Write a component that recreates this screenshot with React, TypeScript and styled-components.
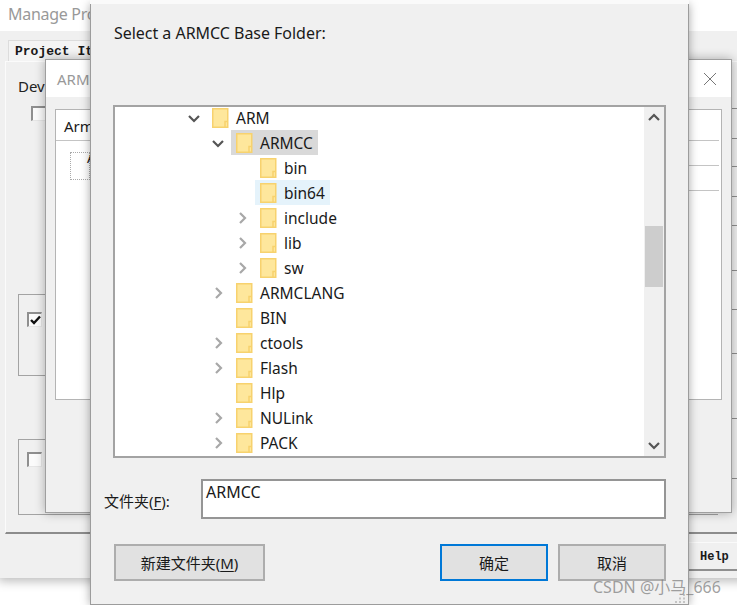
import React from "react";
import styled, { createGlobalStyle } from "styled-components";

const uiFont = `"Noto Sans", "Noto Sans CJK SC", sans-serif`;
const borderGray = "#a3a3a3";

interface ITreeItem {
  name: string;
  level: number;
  arrow?: "open" | "closed";
  state?: "selected" | "hover";
}

const treeItems: ITreeItem[] = [
  { name: "ARM", level: 0, arrow: "open" },
  { name: "ARMCC", level: 1, arrow: "open", state: "selected" },
  { name: "bin", level: 2 },
  { name: "bin64", level: 2, state: "hover" },
  { name: "include", level: 2, arrow: "closed" },
  { name: "lib", level: 2, arrow: "closed" },
  { name: "sw", level: 2, arrow: "closed" },
  { name: "ARMCLANG", level: 1, arrow: "closed" },
  { name: "BIN", level: 1 },
  { name: "ctools", level: 1, arrow: "closed" },
  { name: "Flash", level: 1, arrow: "closed" },
  { name: "Hlp", level: 1 },
  { name: "NULink", level: 1, arrow: "closed" },
  { name: "PACK", level: 1, arrow: "closed" }
];

// slivers of the controls of the back window that stick out on the right
const sliverGaps = [28, 29, 27, 29, 28, 44, 38, 43, 64, 59];

const FolderIcon = () => (
  <svg width="17" height="20" viewBox="0 0 17 20">
    <rect x="0.75" y="0.75" width="15" height="18.5" fill="#fee79c" stroke="#f7d26e" strokeWidth="1.5" />
    <path d="M13 19V13.5H16" fill="none" stroke="#f7d26e" strokeWidth="1.5" />
  </svg>
);

const Chevron = ({ dir, color }: { dir: "up" | "down" | "right"; color: string }) => {
  const d = { up: "M2 9L7 4L12 9", down: "M2 5L7 10L12 5", right: "M5 2L10 7L5 12" }[dir];
  return (
    <svg width="14" height="14" viewBox="0 0 14 14">
      <path d={d} fill="none" stroke={color} strokeWidth="2.2" />
    </svg>
  );
};

export default function App() {
  return (
    <Desktop>
      <GlobalStyle />

      <BackWindow>
        <BackTitle>Manage Project Items</BackTitle>
        <BackBody>
          <ProjectTab>Project Items</ProjectTab>
          <TabPanel>
            <DeviceLabel>Development Tools</DeviceLabel>
            <CheckBox $top={10} $left={13} />
            <GroupBox $top={173} $height={82} $pad={17}>
              <CheckBox $checked>
                <svg width="11" height="10" viewBox="0 0 11 10">
                  <path d="M1 5L4 8L10 1.5" fill="none" stroke="#111" strokeWidth="2.4" />
                </svg>
              </CheckBox>
            </GroupBox>
            <GroupBox $top={63} $height={76} $pad={12}>
              <CheckBox />
            </GroupBox>
          </TabPanel>
          <BottomBar>
            <HelpButton>Help</HelpButton>
          </BottomBar>
        </BackBody>
        <Slivers>
          {sliverGaps.map((gap, i) => (
            <Sliver key={i} $gap={gap} />
          ))}
        </Slivers>
      </BackWindow>

      <ArmWindow>
        <ArmTitleBar>
          <ArmTitle>ARM Compiler</ArmTitle>
          <svg width="14" height="14" viewBox="0 0 14 14">
            <path d="M1 1L13 13M13 1L1 13" stroke="#777" strokeWidth="1" />
          </svg>
        </ArmTitleBar>
        <ArmList>
          <ArmHeader>Arm</ArmHeader>
          <ArmEntry>
            <DottedBox />
            <ArmEntryText>A</ArmEntryText>
          </ArmEntry>
          <ArmLine />
          <ArmLine />
        </ArmList>
      </ArmWindow>

      <Dialog>
        <DialogHeading>Select a ARMCC Base Folder:</DialogHeading>
        <Tree>
          <TreeList>
            {treeItems.map(({ name, level, arrow, state }) => (
              <TreeRow key={name} $level={level}>
                <ArrowSlot>
                  {arrow === "open" && <Chevron dir="down" color="#555" />}
                  {arrow === "closed" && <Chevron dir="right" color="#a8a8a8" />}
                </ArrowSlot>
                <TreeLabel $state={state}>
                  <FolderIcon />
                  <span>{name}</span>
                </TreeLabel>
              </TreeRow>
            ))}
          </TreeList>
          <ScrollBar>
            <Chevron dir="up" color="#555" />
            <ScrollTrack>
              <ScrollThumb />
            </ScrollTrack>
            <Chevron dir="down" color="#555" />
          </ScrollBar>
        </Tree>
        <FolderRow>
          <FolderLabel>
            文件夹(<u>F</u>):
          </FolderLabel>
          <FolderInput>ARMCC</FolderInput>
        </FolderRow>
        <ButtonRow>
          <DialogButton $width={151}>
            新建文件夹(<u>M</u>)
          </DialogButton>
          <ButtonSpacer />
          <DialogButton $width={108} $primary>
            确定
          </DialogButton>
          <DialogButton $width={108}>取消</DialogButton>
        </ButtonRow>
        <SizeGrip width="11" height="9" viewBox="0 0 11 9">
          <path d="M8 0h2v2H8zM4 3.500h2v2H4zM8 3.500h2v2H8zM0 7h2v2H0zM4 7h2v2H4zM8 7h2v2H8z" fill="#c4c4c4" />
        </SizeGrip>
      </Dialog>

      <Watermark>CSDN @小马_666</Watermark>
    </Desktop>
  );
}

const GlobalStyle = createGlobalStyle`
  html, body {
    margin: 0;
    background: #fff;
  }
  u {
    text-underline-offset: 2px;
  }
`;

const Desktop = styled.div`
  position: relative;
  width: 737px;
  height: 605px;
  overflow: hidden;
  background: #fff;
  font-family: ${uiFont};
  color: #1a1a1a;
`;

const BackWindow = styled.div`
  position: absolute;
  left: -2px;
  top: -2px;
  width: 780px;
  height: 580px;
  display: flex;
  flex-direction: column;
  background: #f0f0f0;
  box-shadow: 0 3px 10px rgba(0, 0, 0, 0.28);
`;

const BackTitle = styled.div`
  height: 33px;
  flex: none;
  padding: 3px 0 0 10px;
  box-sizing: border-box;
  background: #fff;
  color: #999;
  font-size: 16px;
  letter-spacing: -0.3px;
  line-height: 26px;
  white-space: nowrap;
`;

const BackBody = styled.div`
  flex: 1;
  display: flex;
  flex-direction: column;
  align-items: flex-start;
  padding: 9px 0 0 7px;
`;

const ProjectTab = styled.div`
  height: 21px;
  margin-left: 3px;
  padding: 0 6px;
  border: 1px solid #dcdcdc;
  border-bottom: none;
  background: #f4f4f4;
  font-family: "Liberation Mono", monospace;
  font-weight: 700;
  font-size: 13px;
  line-height: 21px;
  box-sizing: border-box;
  width: 116px;
  white-space: nowrap;
`;

const TabPanel = styled.div`
  width: 100%;
  height: 473px;
  box-sizing: border-box;
  border-left: 1px solid #fbfbfb;
  border-top: 1px solid #fbfbfb;
  border-bottom: 2px solid #8c8c8c;
  padding: 14px 0 0 12px;
`;

const DeviceLabel = styled.div`
  font-size: 15px;
  line-height: 20px;
  color: #222;
  white-space: nowrap;
`;

const CheckBox = styled.div<{ $top?: number; $left?: number; $checked?: boolean }>`
  width: 15px;
  height: 15px;
  margin: ${({ $top }) => $top ?? 0}px 0 0 ${({ $left }) => $left ?? 0}px;
  box-sizing: border-box;
  display: flex;
  align-items: center;
  justify-content: center;
  background: #fbfbfb;
  border-top: 2px solid #8f8f8f;
  border-left: 2px solid #8f8f8f;
  border-right: 1px solid #e6e6e6;
  border-bottom: 1px solid #e6e6e6;
`;

const GroupBox = styled.div<{ $top: number; $height: number; $pad: number }>`
  width: 700px;
  height: ${({ $height }) => $height}px;
  margin-top: ${({ $top }) => $top}px;
  box-sizing: border-box;
  border: 1px solid ${borderGray};
  border-right: none;
  padding: ${({ $pad }) => $pad}px 0 0 8px;
`;

const BottomBar = styled.div`
  width: 100%;
  height: 44px;
  display: flex;
  align-items: flex-start;
  padding-top: 8px;
  box-sizing: border-box;
`;

const HelpButton = styled.div`
  margin-left: 680px;
  width: 70px;
  height: 29px;
  box-sizing: border-box;
  border-top: 1px solid #fafafa;
  border-bottom: 2px solid #8f8f8f;
  padding-left: 15px;
  font-family: "Liberation Mono", monospace;
  font-weight: 700;
  font-size: 12px;
  line-height: 28px;
`;

const Slivers = styled.div`
  position: absolute;
  left: 734px;
  top: 82px;
  width: 40px;
`;

const Sliver = styled.div<{ $gap: number }>`
  margin-top: ${({ $gap }) => $gap}px;
  height: 1px;
  background: #8f8f8f;
`;

const ArmWindow = styled.div`
  position: absolute;
  left: 45px;
  top: 59px;
  width: 687px;
  height: 454px;
  box-sizing: border-box;
  border: 1px solid #9f9f9f;
  background: #f0f0f0;
  box-shadow: 0 0 10px rgba(0, 0, 0, 0.3);
`;

const ArmTitleBar = styled.div`
  height: 37px;
  box-sizing: border-box;
  padding: 0 14px 0 11px;
  display: flex;
  align-items: center;
  justify-content: space-between;
  background: #fff;
`;

const ArmTitle = styled.div`
  font-size: 15px;
  color: #999;
`;

const ArmList = styled.div`
  height: 291px;
  margin: 12px 9px 0;
  box-sizing: border-box;
  border: 1px solid #b4b4b4;
  background: #fff;
  display: flex;
  flex-direction: column;
`;

const ArmHeader = styled.div`
  height: 31px;
  flex: none;
  box-sizing: border-box;
  padding-left: 8px;
  border-bottom: 1px solid #c4c4c4;
  font-size: 15px;
  line-height: 33px;
  margin-right: 2px;
`;

const ArmEntry = styled.div`
  height: 14px;
  flex: none;
  display: flex;
  padding: 11px 0 0 14px;
  margin-bottom: -25px;
`;

const DottedBox = styled.div`
  width: 18px;
  height: 26px;
  flex: none;
  border: 1px dotted #aaa;
`;

const ArmEntryText = styled.div`
  font-size: 14px;
  line-height: 12px;
  margin-left: -3px;
`;

const ArmLine = styled.div`
  height: 24px;
  flex: none;
  margin: 0 2px 0 200px;
  border-bottom: 1px solid #c4c4c4;
`;

const Dialog = styled.div`
  position: absolute;
  left: 90px;
  top: 4px;
  width: 599px;
  height: 601px;
  box-sizing: border-box;
  padding: 0 22px;
  display: flex;
  flex-direction: column;
  background: #f0f0f0;
  border: 1px solid #9c9c9c;
  border-top: none;
  box-shadow: 0 -4px 0 #fafafa, 0 0 9px rgba(0, 0, 0, 0.35);
`;

const DialogHeading = styled.div`
  height: 101px;
  flex: none;
  box-sizing: border-box;
  padding: 18px 0 0 1px;
  font-size: 16px;
  letter-spacing: -0.03px;
  line-height: 22px;
`;

const Tree = styled.div`
  height: 353px;
  width: 553px;
  flex: none;
  box-sizing: border-box;
  border: 2px solid ${borderGray};
  background: #fff;
  display: flex;
  overflow: hidden;
`;

const TreeList = styled.div`
  flex: 1;
  margin-top: -2px;
`;

const TreeRow = styled.div<{ $level: number }>`
  height: 25px;
  display: flex;
  align-items: center;
  padding-left: ${({ $level }) => 72 + $level * 24}px;
`;

const ArrowSlot = styled.div`
  width: 14px;
  height: 14px;
  flex: none;
  margin-right: 6px;
  display: flex;
`;

const labelBackgrounds = { selected: "#d9d9d9", hover: "#e5f3fb" };

const TreeLabel = styled.div<{ $state?: "selected" | "hover" }>`
  height: 25px;
  display: flex;
  align-items: center;
  gap: 7px;
  padding: 0 5px;
  font-size: 15.5px;
  background: ${({ $state }) => ($state ? labelBackgrounds[$state] : "transparent")};
`;

const ScrollBar = styled.div`
  width: 20px;
  flex: none;
  padding: 4px 0;
  box-sizing: border-box;
  display: flex;
  flex-direction: column;
  align-items: center;
  background: #f0f0f0;
`;

const ScrollTrack = styled.div`
  flex: 1;
  width: 100%;
  padding-top: 101px;
  box-sizing: border-box;
`;

const ScrollThumb = styled.div`
  height: 61px;
  margin: 0 1px;
  background: #cdcdcd;
`;

const FolderRow = styled.div`
  height: 40px;
  flex: none;
  margin-top: 21px;
  display: flex;
`;

const FolderLabel = styled.div`
  width: 97px;
  flex: none;
  margin-left: -9px;
  font-size: 15px;
  line-height: 44px;
`;

const FolderInput = styled.div`
  width: 465px;
  box-sizing: border-box;
  border: 2px solid #959595;
  background: #fff;
  padding: 1px 3px;
  font-size: 16px;
  line-height: 20px;
`;

const ButtonRow = styled.div`
  margin-top: 25px;
  display: flex;
  gap: 10px;
  width: 552px;
  margin-left: 1px;
`;

const ButtonSpacer = styled.div`
  flex: 1;
`;

const DialogButton = styled.div<{ $width: number; $primary?: boolean }>`
  width: ${({ $width }) => $width}px;
  height: 37px;
  box-sizing: border-box;
  display: flex;
  align-items: center;
  justify-content: center;
  background: #e1e1e1;
  border: 2px solid ${({ $primary }) => ($primary ? "#0078d7" : "#adadad")};
  font-size: 15px;
`;

const SizeGrip = styled.svg`
  position: absolute;
  right: 2px;
  bottom: 1px;
`;

const Watermark = styled.div`
  position: absolute;
  left: 593px;
  top: 577px;
  font-size: 16px;
  line-height: 20px;
  color: rgba(120, 120, 120, 0.7);
  white-space: nowrap;
`;
